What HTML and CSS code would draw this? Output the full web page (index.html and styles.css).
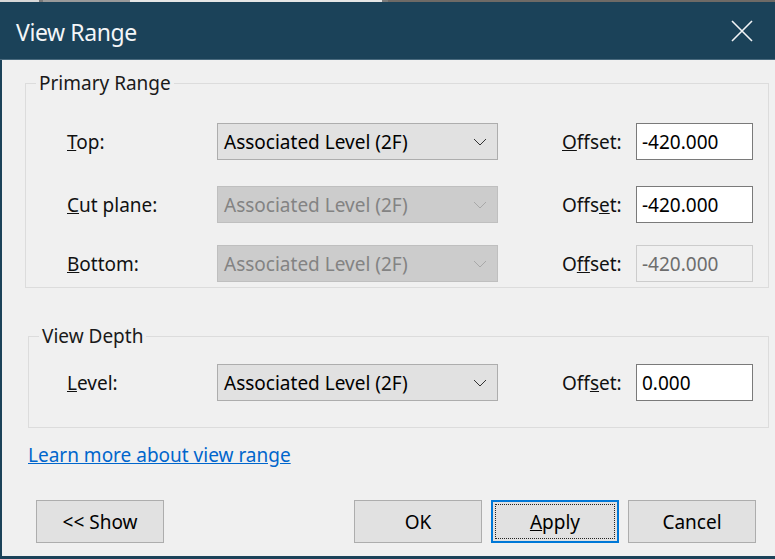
FILE: index.html
```html
<!DOCTYPE html>
<html lang="en">
<head>
<meta charset="UTF-8">
<title>View Range</title>
<link rel="stylesheet" href="styles.css">
</head>
<body>
<!-- 後面視窗露出的一點邊 -->
<div class="strip">
  <span class="seg seg-a"></span>
  <span class="seg seg-b"></span>
  <span class="seg seg-c"></span>
  <span class="seg seg-d"></span>
  <span class="seg seg-e"></span>
</div>

<div class="dialog">
  <div class="titlebar">
    <span class="title">View Range</span>
    <svg class="close" width="22" height="22" viewBox="0 0 22 22">
      <path d="M1 1 L21 21 M21 1 L1 21" stroke="#f2f4f6" stroke-width="1.6" fill="none"/>
    </svg>
  </div>

  <div class="content">
    <fieldset class="group group-primary">
      <legend>Primary Range</legend>

      <div class="row">
        <label class="lbl"><u>T</u>op:</label>
        <div class="select">
          <span>Associated Level (2F)</span>
          <svg class="chev" width="14" height="8" viewBox="0 0 14 8"><path d="M1 1 L7 7 L13 1" stroke="currentColor" stroke-width="1" fill="none"/></svg>
        </div>
        <label class="lbl-offset"><u>O</u>ffset:</label>
        <input class="num" type="text" value="-420.000">
      </div>

      <div class="row row-cut">
        <label class="lbl"><u>C</u>ut plane:</label>
        <div class="select disabled">
          <span>Associated Level (2F)</span>
          <svg class="chev" width="14" height="8" viewBox="0 0 14 8"><path d="M1 1 L7 7 L13 1" stroke="currentColor" stroke-width="1" fill="none"/></svg>
        </div>
        <label class="lbl-offset">Offs<u>e</u>t:</label>
        <input class="num" type="text" value="-420.000">
      </div>

      <div class="row row-bottom">
        <label class="lbl"><u>B</u>ottom:</label>
        <div class="select disabled">
          <span>Associated Level (2F)</span>
          <svg class="chev" width="14" height="8" viewBox="0 0 14 8"><path d="M1 1 L7 7 L13 1" stroke="currentColor" stroke-width="1" fill="none"/></svg>
        </div>
        <label class="lbl-offset">O<u>f</u>fset:</label>
        <input class="num" type="text" value="-420.000" disabled>
      </div>
    </fieldset>

    <fieldset class="group group-depth">
      <legend>View Depth</legend>
      <div class="row">
        <label class="lbl"><u>L</u>evel:</label>
        <div class="select">
          <span>Associated Level (2F)</span>
          <svg class="chev" width="14" height="8" viewBox="0 0 14 8"><path d="M1 1 L7 7 L13 1" stroke="currentColor" stroke-width="1" fill="none"/></svg>
        </div>
        <label class="lbl-offset">Off<u>s</u>et:</label>
        <input class="num" type="text" value="0.000">
      </div>
    </fieldset>

    <a class="learn" href="#">Learn more about view range</a>

    <div class="buttons">
      <button class="btn">&lt;&lt; Show</button>
      <div class="btn-group">
        <button class="btn">OK</button>
        <button class="btn btn-focus"><u>A</u>pply</button>
        <button class="btn">Cancel</button>
      </div>
    </div>
  </div>
</div>
</body>
</html>
```

FILE: styles.css
```css
html, body {
margin: 0;
padding: 0;
height: 100%;
background: #f0f0f0;
}
body {
font-family: "Noto Sans", "Open Sans", Arial, sans-serif;
font-size: 19px;
color: #000;
overflow: hidden;
}

/* 上緣的背景視窗 */
.strip {
height: 2px;
display: flex;
background: #7a7a7a;
}
.seg { height: 2px; display: block; }
.seg-a { width: 40px; background: #d8d8d8; }
.seg-b { width: 90px; background: #9a9a9a; margin-left: 4px; }
.seg-c { width: 260px; background: #e6e6e6; }
.seg-d { width: 400px; background: #6e6a66; margin-left: 6px; }
.seg-e { flex: 1; background: #e0e0e0; }

.dialog {
height: 557px;
background: #1b4259;
display: flex;
flex-direction: column;
}
.titlebar {
height: 57px;
display: flex;
align-items: center;
justify-content: space-between;
padding: 0 22px 0 16px;
border-bottom: 1px solid #4a6a7e;
}
.title {
color: #f4f6f8;
font-size: 23px;
letter-spacing: -0.4px;
margin-top: 2px;
}
.close { display: block; margin-top: 0; }

.content {
flex: 1;
margin: 0 0 3px 2px;
background: #f0f0f0;
display: flex;
flex-direction: column;
}

/* 群組框 */
.group {
border: 1px solid #dcdcdc;
margin: 0;
min-width: 0;
}
.group legend {
padding: 0 3px;
line-height: 22px;
color: #1a1a1a;
}
.group-primary {
margin: 12px 6px 0 23px;
padding: 0 0 5px 10px;
}
.group-depth {
margin: 37px 6px 0 26px;
padding: 0 0 26px 10px;
}

.row {
display: grid;
grid-template-columns: 150px 281px 64px 74px 117px;
align-items: center;
height: 37px;
}
.group-primary .row { margin-left: 31px; }
.group-primary .row:first-of-type { margin-top: 29px; }
.group-primary .row-cut { margin-top: 26px; }
.group-primary .row-bottom { margin-top: 22px; }
.group-depth .row { margin-left: 28px; margin-top: 17px; }

.lbl { grid-column: 1; color: #111; }
.lbl-offset { grid-column: 4; color: #111; }

.select {
grid-column: 2;
height: 37px;
box-sizing: border-box;
border: 1px solid #adadad;
background: #e1e1e1;
display: flex;
align-items: center;
justify-content: space-between;
padding: 0 8px 0 6px;
color: #000;
}
.select .chev { color: #333; margin-right: 2px; }
.select.disabled {
background: #cccccc;
border-color: #bfbfbf;
color: #838383;
}
.select.disabled .chev { color: #a8a8a8; }

.num {
grid-column: 5;
height: 37px;
box-sizing: border-box;
border: 1px solid #7a7a7a;
background: #fff;
font-family: inherit;
font-size: 19px;
padding: 0 5px;
color: #000;
margin: 0;
outline: none;
}
.num:disabled {
border-color: #cccccc;
background: #f0f0f0;
color: #6d6d6d;
}

.learn {
margin: 16px 0 0 26px;
align-self: flex-start;
color: #0066cc;
line-height: 22px;
text-decoration: underline;
}

.buttons {
display: flex;
justify-content: space-between;
margin: auto 19px 13px 34px;
}
.btn-group { display: flex; gap: 9px; }
.btn {
width: 128px;
height: 43px;
box-sizing: border-box;
border: 1px solid #adadad;
background: #e1e1e1;
font-family: inherit;
font-size: 19px;
color: #000;
padding: 0;
margin: 0;
}
.btn-focus {
border: 2px solid #0078d7;
outline: 1px dotted #222;
outline-offset: -5px;
}
```
